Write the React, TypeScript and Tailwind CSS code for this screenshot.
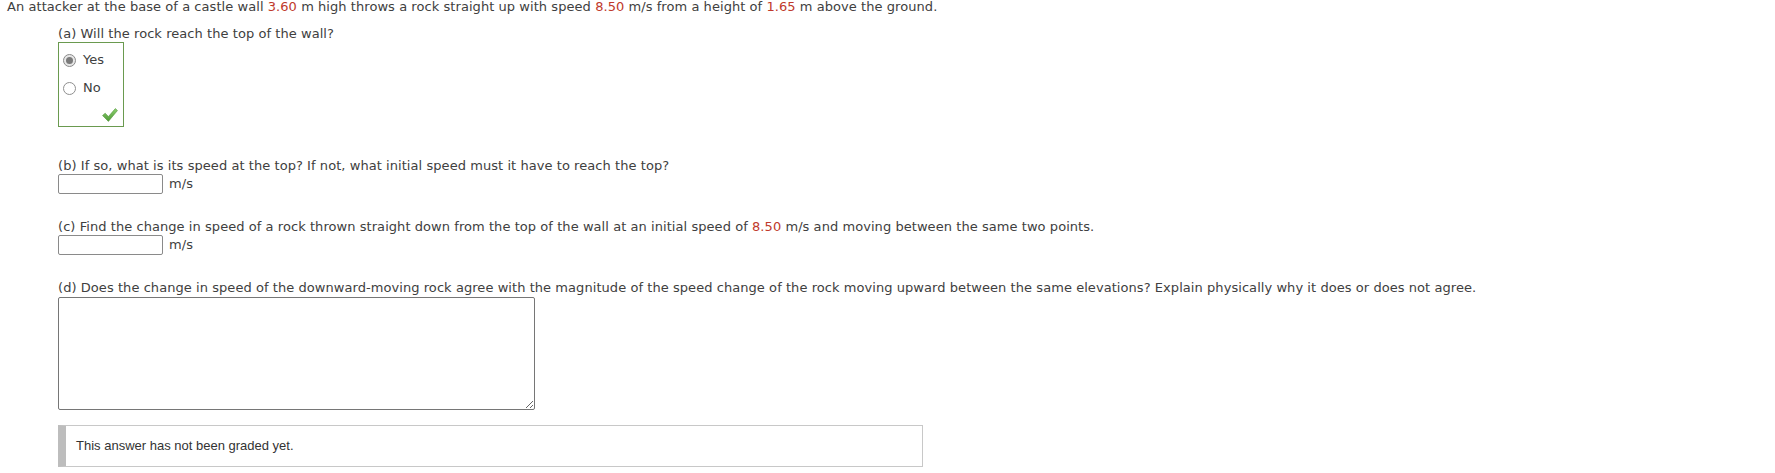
import React from 'react';

const Num: React.FC<{ children: React.ReactNode }> = ({ children }) => (
  <span className="text-[#c0392b]">{children}</span>
);

const Radio: React.FC<{ checked?: boolean; label: string }> = ({ checked = false, label }) => (
  <div className="flex items-center h-[28px]">
    <span
      className={`w-[13px] h-[13px] rounded-full border flex items-center justify-center ${
        checked ? 'border-[#8a8a8a] bg-[#e6e6e6]' : 'border-[#8f8f8f] bg-white'
      }`}
    >
      {checked && <span className="w-[7px] h-[7px] rounded-full bg-[#7a7a7a]"></span>}
    </span>
    <span className="ml-[7px]">{label}</span>
  </div>
);

const Check = () => (
  <svg width="16" height="14" viewBox="0 0 15 13">
    <defs>
      <linearGradient id="chk" x1="0" y1="0" x2="0" y2="1">
        <stop offset="0" stopColor="#8ccf6e" />
        <stop offset="1" stopColor="#4e9a36" />
      </linearGradient>
    </defs>
    <path d="M0.5 7 L3 4.8 L6 8 L12.5 0.5 L14.5 2.3 L6 12.5 Z" fill="url(#chk)" stroke="#5a9b44" strokeWidth="0.6" />
  </svg>
);

const UnitInput = () => (
  <div className="flex items-center h-[20px]">
    <input className="w-[105px] h-[20px] border border-[#8a8a8a] rounded-[2px] bg-white outline-none" />
    <span className="ml-[6px]">m/s</span>
  </div>
);

export default function App() {
  return (
    <div
      className="w-[1775px] h-[473px] bg-white text-[#404040] text-[13px] leading-[16px] tracking-[0.06px]"
      style={{ fontFamily: '"DejaVu Sans", Verdana, sans-serif' }}
    >
      <div className="pl-[7px] -mt-px">
        An attacker at the base of a castle wall <Num>3.60</Num> m high throws a rock straight up with speed{' '}
        <Num>8.50</Num> m/s from a height of <Num>1.65</Num> m above the ground.
      </div>

      <div className="pl-[58px] pt-[11px]">
        <div>(a) Will the rock reach the top of the wall?</div>
        <div className="w-[66px] h-[85px] border border-[#6a9a4f] flex flex-col pl-[4px] pt-[3px]">
          <Radio checked label="Yes" />
          <Radio label="No" />
          <div className="flex justify-end pr-[5px] mt-[6px]">
            <Check />
          </div>
        </div>

        <div className="mt-[31px]">(b) If so, what is its speed at the top? If not, what initial speed must it have to reach the top?</div>
        <UnitInput />

        <div className="mt-[25px]">
          (c) Find the change in speed of a rock thrown straight down from the top of the wall at an initial speed of{' '}
          <Num>8.50</Num> m/s and moving between the same two points.
        </div>
        <UnitInput />

        <div className="mt-[25px]">
          (d) Does the change in speed of the downward-moving rock agree with the magnitude of the speed change of the rock
          moving upward between the same elevations? Explain physically why it does or does not agree.
        </div>
        <textarea className="block w-[477px] h-[113px] border border-[#767676] rounded-[2px] mt-px bg-white outline-none" />

        <div className="mt-[15px] w-[865px] h-[42px] border border-[#c8c8c8] border-l-[8px] border-l-[#bdbdbd] flex items-center pl-[10px]">
          <span
            className="text-[13px] text-[#333] tracking-normal"
            style={{ fontFamily: '"Liberation Sans", Arial, sans-serif' }}
          >
            This answer has not been graded yet.
          </span>
        </div>
      </div>
    </div>
  );
}
